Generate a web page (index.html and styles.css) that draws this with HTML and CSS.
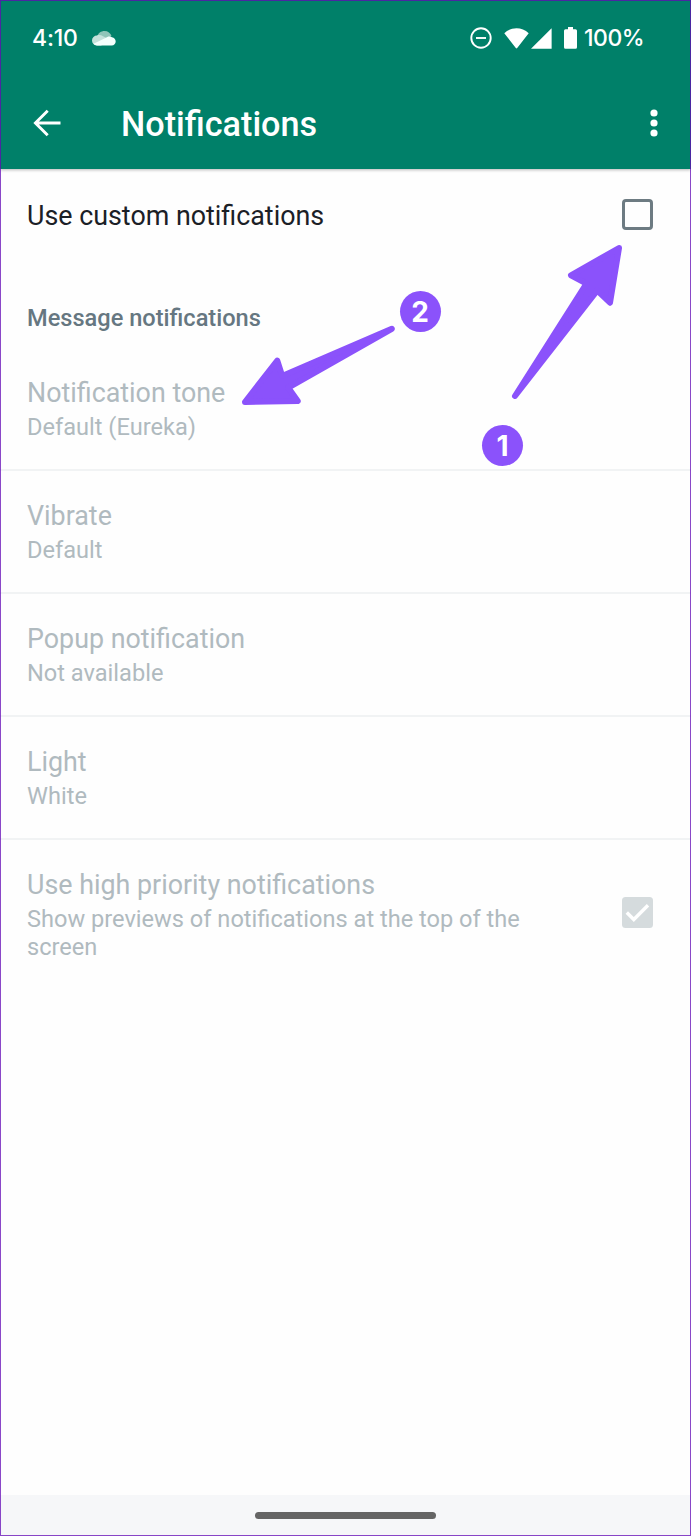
FILE: index.html
```html
<!DOCTYPE html>
<html lang="en">
<head>
<meta charset="utf-8">
<title>Notifications</title>
<link rel="stylesheet" href="styles.css">
</head>
<body>
<div class="screen">
  <header class="top">
    <div class="status">
      <span class="clock">4:10</span>
      <svg class="cloud" width="24" height="16" viewBox="0 0 24 16">
        <path fill="#8fc5b8" d="M5 7C6 3 9 1 12.500 1c3.500 0 6 2 7 5l-6 4z"/>
        <path fill="#c5e2db" d="M5 15.500A4.900 4.900 0 0 1 5 5.500c2-.8 4-.5 6 .8l8 4-10 5.200z"/>
        <path fill="#f4fffc" d="M5 15.500c-1.500 0-2.800-.7-3.500-1.700L13.500 8c2-2 5-2 6.500-.8 2.200.3 3.700 2 3.700 4.300 0 2.300-1.700 4-4 4z"/>
      </svg>
      <div class="indicators">
        <svg class="dnd" width="22" height="22" viewBox="0 0 22 22" fill="none" stroke="#fff" stroke-width="1.900"><circle cx="11" cy="11" r="9.700"/><path d="M6 11h10"/></svg>
        <svg class="wifi" width="25" height="21" viewBox="0 0 25 21"><path fill="#fff" d="M.3 5.300C7-1.400 18-1.400 24.700 5.300L13.200 20q-.7.900-1.400 0z"/></svg>
        <svg class="signal" width="21" height="21" viewBox="0 0 21 21"><path fill="#fff" d="M20.600.2v20.600H0z"/></svg>
        <svg class="battery" width="13" height="22" viewBox="0 0 13 22"><path fill="#fff" d="M4 0h5v2.200h2.500Q13 2.200 13 3.700v16.600q0 1.500-1.500 1.500h-10Q0 21.800 0 20.300V3.700q0-1.500 1.500-1.500H4z"/></svg>
        <span class="percent">100%</span>
      </div>
    </div>
    <div class="bar">
      <svg class="back" width="28" height="28" viewBox="0 0 28 28" fill="none" stroke="#fff" stroke-width="2.900"><path d="M27.500 14H2.500M14.700 1.700L2.400 14l12.300 12.300"/></svg>
      <h1 class="title">Notifications</h1>
      <svg class="more" width="8" height="28" viewBox="0 0 8 28" fill="#fff"><circle cx="4" cy="4" r="3.600"/><circle cx="4" cy="14" r="3.600"/><circle cx="4" cy="24" r="3.600"/></svg>
    </div>
  </header>
  <main class="content">
    <div class="custom"><span class="label">Use custom notifications</span><span class="checkbox"></span></div>
    <h2 class="section">Message notifications</h2>
    <div class="item"><div class="name">Notification tone</div><div class="value">Default (Eureka)</div></div>
    <div class="item"><div class="name">Vibrate</div><div class="value">Default</div></div>
    <div class="item"><div class="name">Popup notification</div><div class="value">Not available</div></div>
    <div class="item"><div class="name">Light</div><div class="value">White</div></div>
    <div class="item priority">
      <div class="copy"><div class="name">Use high priority notifications</div><div class="value">Show previews of notifications at the top of the screen</div></div>
      <svg class="checked" width="31" height="31" viewBox="0 0 31 31"><rect width="31" height="31" rx="3.500" fill="#d5dbdd"/><path d="M4.800 15.500l7 7L26 8.300" fill="none" stroke="#fff" stroke-width="3.400"/></svg>
    </div>
  </main>
  <footer class="navbar"><span class="pill"></span></footer>
  <svg class="arrows" width="691" height="1536" viewBox="0 0 691 1536">
    <path d="M619 248L571 275.300 586.500 283.600 515 396 597.300 290.500 610 302.700z"/>
    <path d="M245 402L277.300 360.700 282.200 376 391.800 328.800 288.300 387.700 297.700 401z"/>
  </svg>
  <span class="badge one">1</span>
  <span class="badge two">2</span>
  <div class="frame"></div>
</div>
</body>
</html>
```
FILE: styles.css
```css
* { box-sizing: border-box; }
body { margin: 0; font-family: Roboto, "Liberation Sans", sans-serif; background: #fefefe; }
svg { display: block; flex: none; }
.screen { position: relative; width: 691px; height: 1536px; display: flex; flex-direction: column; background: #fefefe; overflow: hidden; }
.top { height: 169px; background: #008069; color: #fff; box-shadow: 0 1px 3px rgba(0, 0, 0, .28); }
.status { height: 76px; display: flex; align-items: center; padding: 0 47px 0 32px; font: 500 23px/28px Inter, sans-serif; }
.clock { width: 60px; letter-spacing: -.2px; }
.indicators { margin-left: auto; display: flex; align-items: center; }
.wifi { margin-left: 12px; }
.signal { margin-left: 2px; }
.battery { margin: 0 7px 0 12px; }
.percent { width: 60px; white-space: nowrap; letter-spacing: -.5px; }
.bar { height: 94px; display: flex; align-items: center; padding: 0 33px; }
.back, .more { margin-top: -1px; }
.title { margin: 2px 0 0 60px; font-size: 34.200px; font-weight: 500; line-height: 40px; }
.more { margin-left: auto; }
.content { flex: 1; }
.custom { height: 91px; display: flex; align-items: center; justify-content: space-between; padding: 0 38px 0 27px; }
.label { margin-top: 3px; font-size: 26.850px; line-height: 32px; color: #1b2026; }
.checkbox { width: 31px; height: 31px; border: 3px solid #6d7b82; border-radius: 4px; }
.section { margin: 0; padding: 43px 27px 0; height: 88px; font-size: 23.600px; line-height: 30px; font-weight: 500; color: #667781; }
.item { height: 123px; padding: 28px 27px 0; border-bottom: 2px solid #f1f3f4; color: #b0babf; }
.name { font-size: 26.850px; line-height: 34px; }
.value { margin-top: 3px; font-size: 23.600px; line-height: 28px; }
.priority { height: 150px; display: flex; justify-content: space-between; border: 0; padding-right: 38px; }
.copy { width: 520px; }
.checked { margin-top: 29px; }
.navbar { height: 41px; background: #f6f7f9; display: flex; align-items: center; justify-content: center; }
.pill { width: 181px; height: 7px; border-radius: 4px; background: #656565; }
.arrows { position: absolute; left: 0; top: 0; fill: #8b52fb; stroke: #8b52fb; stroke-width: 6; stroke-linejoin: round; }
.badge { position: absolute; width: 41px; height: 41px; border-radius: 50%; background: #8b52fb; color: #fff; text-align: center; font: 700 28px/42px Inter, sans-serif; }
.one { left: 482px; top: 425px; }
.two { left: 399.500px; top: 291px; }
.frame { position: absolute; inset: 0; border: 1px solid rgba(99, 10, 182, .75); }
```
